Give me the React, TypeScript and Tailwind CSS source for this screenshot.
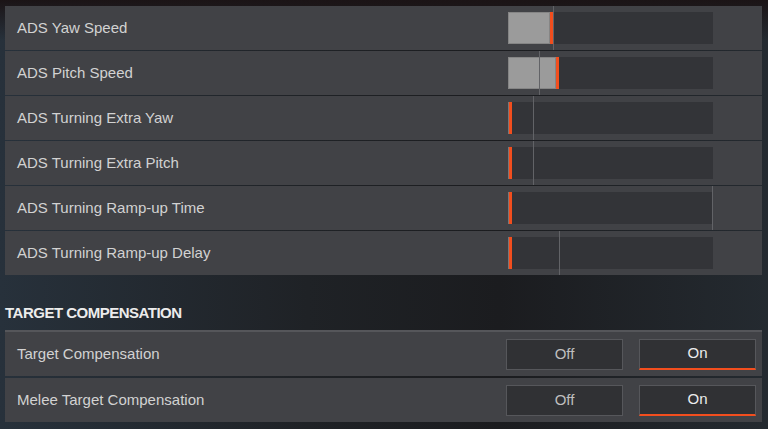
import React from "react";

type Slider = { label: string; fill: number; marker: number };

const sliders: Slider[] = [
    { label: "ADS Yaw Speed", fill: 42, marker: 45 },
    { label: "ADS Pitch Speed", fill: 48, marker: 31 },
    { label: "ADS Turning Extra Yaw", fill: 1, marker: 25 },
    { label: "ADS Turning Extra Pitch", fill: 1, marker: 25 },
    { label: "ADS Turning Ramp-up Time", fill: 1, marker: 204 },
    { label: "ADS Turning Ramp-up Delay", fill: 1, marker: 51 },
];

const toggles = ["Target Compensation", "Melee Target Compensation"];

const SliderRow = ({ label, fill, marker }: Slider) => (
    <div className="flex items-center h-[44px] bg-[#414246] pl-3 pr-[49px]">
        <span className="flex-1 text-[15px] text-[#d2d2d2]">{label}</span>
        <div className="relative w-[205px] h-full flex items-center">
            <div className="flex w-full h-[32px] bg-[#333438]">
                {/* filled part */}
                <div
                    className={fill > 1 ? "h-full bg-[#9b9b9b] border border-[#858585]" : "h-full bg-[#77787b]"}
                    style={{ width: fill }}
                />
                <div className="h-full w-[3px] bg-[#f24e1e]" />
            </div>
            {/* default marker */}
            <div className="absolute top-0 bottom-0 w-px bg-[#626367]" style={{ left: marker }} />
        </div>
    </div>
);

const ToggleRow = ({ label }: { label: string }) => (
    <div className="flex items-center h-[44px] bg-[#414246] pl-3 pr-[6px]">
        <span className="flex-1 text-[15px] text-[#d2d2d2]">{label}</span>
        <div className="flex gap-4">
            <div className="w-[117px] h-[31px] flex items-center justify-center bg-[#303134] border border-[#56575b] text-[15px] text-[#bfbfbf]">
                Off
            </div>
            <div className="w-[117px] h-[31px] flex items-center justify-center bg-[#303134] border border-[#56575b] border-b-2 border-b-[#f24e1e] text-[15px] text-[#ececec]">
                On
            </div>
        </div>
    </div>
);

export default function App() {
    return (
        <div
            className="w-[768px] h-[429px] overflow-hidden pt-[6px] pl-[5px] pr-[6px] bg-[linear-gradient(180deg,#1b1416_0px,rgba(27,20,22,0)_40px),linear-gradient(90deg,#27313b_0%,#1f2226_40%,#1b1c1f_65%,#242a30_100%)]"
            style={{ fontFamily: '"Liberation Sans", Arial, sans-serif' }}
        >
            {/* Slider settings */}
            <div className="flex flex-col gap-px">
                {sliders.map((s) => (
                    <SliderRow key={s.label} {...s} />
                ))}
            </div>

            {/* Target compensation */}
            <div className="mt-[29px]">
                <h2 className="text-[15px] leading-[18px] font-bold tracking-[-0.5px] text-[#ececec] uppercase">
                    Target Compensation
                </h2>
                <div className="mt-2 h-[2px] bg-[#55565a]" />
                <div className="flex flex-col gap-[2px]">
                    {toggles.map((t) => (
                        <ToggleRow key={t} label={t} />
                    ))}
                </div>
            </div>
        </div>
    );
}
